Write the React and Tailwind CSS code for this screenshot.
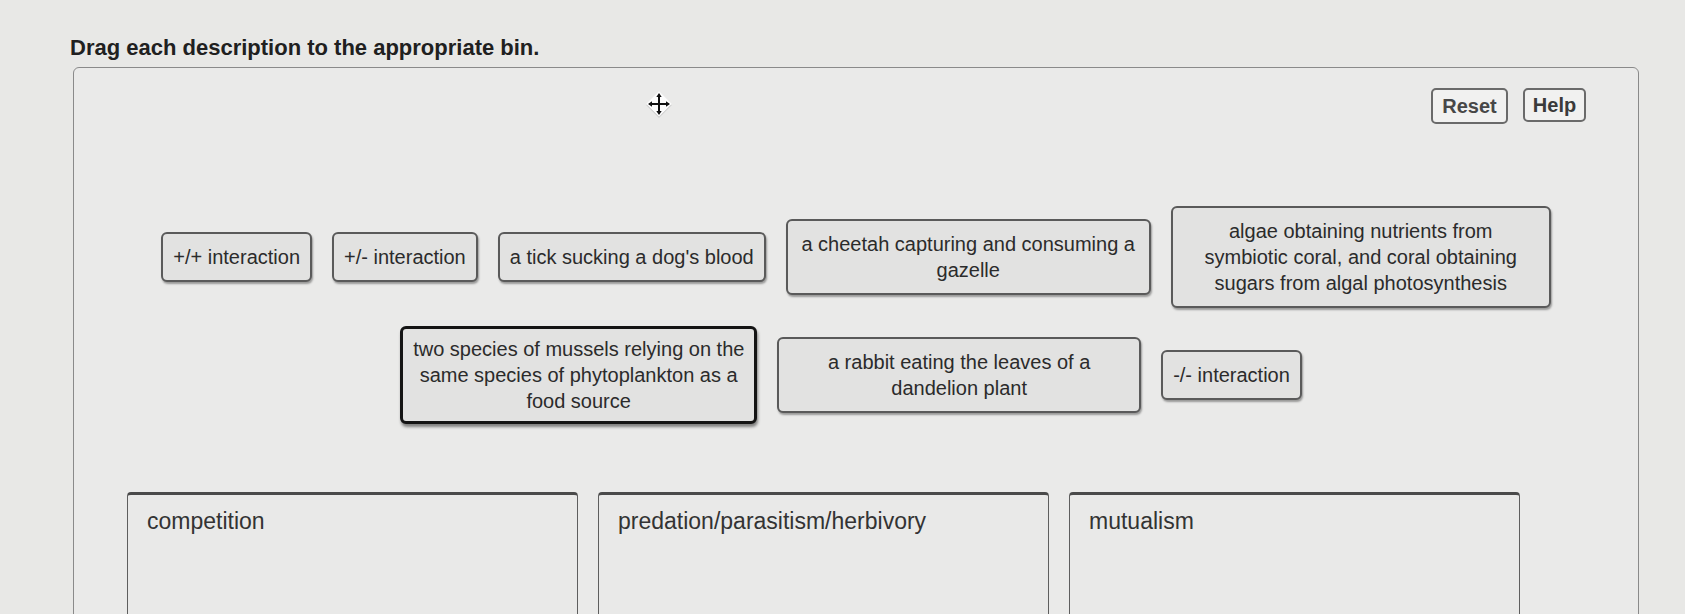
import React from 'react';

const chips1 = [
  { id: 'pp', lines: ['+/+ interaction'] },
  { id: 'pm', lines: ['+/- interaction'] },
  { id: 'tick', lines: ["a tick sucking a dog's blood"] },
  { id: 'cheetah', lines: ['a cheetah capturing and consuming a', 'gazelle'], w: 'w-[365px]' },
  {
    id: 'algae',
    lines: ['algae obtaining nutrients from', 'symbiotic coral, and coral obtaining', 'sugars from algal photosynthesis'],
    w: 'w-[380px]',
  },
];

const chips2 = [
  {
    id: 'mussels',
    lines: ['two species of mussels relying on the', 'same species of phytoplankton as a', 'food source'],
    w: 'w-[357px]',
    selected: true,
  },
  { id: 'rabbit', lines: ['a rabbit eating the leaves of a', 'dandelion plant'], w: 'w-[364px]' },
  { id: 'mm', lines: ['-/- interaction'] },
];

const bins = ['competition', 'predation/parasitism/herbivory', 'mutualism'];

// four-way drag handle on a white diamond
const MoveHandle = () => (
  <svg width="34" height="34" viewBox="0 0 34 34">
    <rect x="8" y="9" width="18" height="18" transform="rotate(45 17 18)" fill="#b0b0b0" opacity="0.7" />
    <rect x="8" y="8" width="18" height="18" transform="rotate(45 17 17)" fill="#fdfdfd" />
    <path d="M17 7.5V26.5M7.5 17H26.5" stroke="#111" strokeWidth="2" />
    <path d="M17 6L14.3 10H19.7Z M17 28L14.3 24H19.7Z M6 17L10 14.3V19.7Z M28 17L24 14.3V19.7Z" fill="#111" />
  </svg>
);

const Chip = ({ chip }) => (
  <div
    className={`${chip.w || ''} shrink-0 cursor-move rounded-[6px] bg-[#e2e2e1] px-[10px] text-center text-[20px] leading-[26px] whitespace-nowrap text-[#2b2b2b] ${
      chip.selected
        ? 'border-[3px] border-[#141414] py-[7px] shadow-[1px_3px_3px_rgba(0,0,0,0.45)]'
        : 'border-2 border-[#5a5a5a] py-[10px] shadow-[1px_2px_2px_rgba(0,0,0,0.35)]'
    }`}
  >
    {chip.lines.map((l, i) => (
      <div key={i}>{l}</div>
    ))}
  </div>
);

export default function App() {
  return (
    <div className="h-[614px] w-full overflow-hidden bg-[#e8e8e6] font-['Liberation_Sans',Arial,sans-serif]">
      <h1 className="pt-[34px] pl-[70px] text-[22px] leading-[27px] font-bold text-[#202020]">
        Drag each description to the appropriate bin.
      </h1>

      <div className="mt-[6px] ml-[73px] h-[640px] w-[1566px] rounded-md border-[1.5px] border-[#8a8a8a] bg-[#eaeae9]">
        {/* toolbar */}
        <div className="flex items-start pt-[20px] pr-[52px]">
          <div className="ml-[568px] mt-[-1px]">
            <MoveHandle />
          </div>
          <div className="flex-1" />
          <button className="h-[36px] w-[77px] rounded-[5px] border-2 border-[#6a6a6a] bg-[#f1f1f0] text-[20px] font-bold text-[#474747]">
            Reset
          </button>
          <button className="ml-[15px] h-[34px] w-[63px] rounded-[5px] border-2 border-[#6a6a6a] bg-[#f1f1f0] text-[20px] font-bold text-[#3a3a3a]">
            Help
          </button>
        </div>

        {/* draggable items */}
        <div className="mt-[82px] flex flex-col gap-[18px]">
          <div className="flex items-center justify-center gap-[20px]">
            {chips1.map((c) => (
              <Chip key={c.id} chip={c} />
            ))}
          </div>
          <div className="flex items-center justify-center gap-[20px] pr-[10px]">
            {chips2.map((c) => (
              <Chip key={c.id} chip={c} />
            ))}
          </div>
        </div>

        {/* bins */}
        <div className="mt-[68px] flex gap-[20px] pl-[53px]">
          {bins.map((b) => (
            <div
              key={b}
              className="h-[220px] w-[451px] rounded-t-[4px] border-x-[1.5px] border-t-[3px] border-x-[#5e5e5e] border-t-[#4a4a4a] bg-[#e9e9e8]"
            >
              <div className="inline-block pt-[12px] pl-[19px] pr-2 text-[23px] leading-[28px] text-[#333]">{b}</div>
            </div>
          ))}
        </div>
      </div>
    </div>
  );
}
